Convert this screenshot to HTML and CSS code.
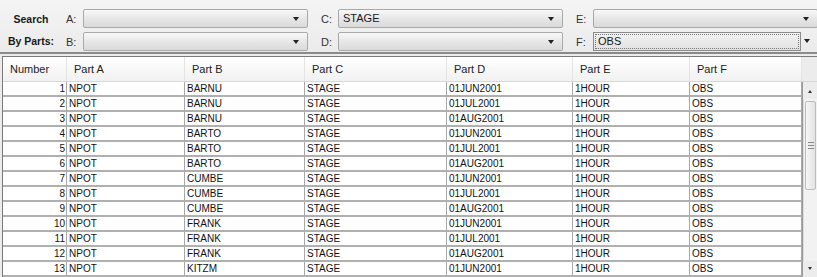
FILE: index.html
```html
<!DOCTYPE html>
<html>
<head>
    <title>Search By Parts</title>
    <link rel="stylesheet" href="styles.css">
</head>
<body>
    <div class="search-panel">
        <div class="search-title">
            <div>Search</div>
            <div>By Parts:</div>
        </div>
        <div class="field-col">
            <div class="field"><span class="field-label">A:</span><div class="combo"><span></span><i class="arrow"></i></div></div>
            <div class="field"><span class="field-label">B:</span><div class="combo"><span></span><i class="arrow"></i></div></div>
        </div>
        <div class="field-col">
            <div class="field"><span class="field-label">C:</span><div class="combo"><span>STAGE</span><i class="arrow"></i></div></div>
            <div class="field"><span class="field-label">D:</span><div class="combo"><span></span><i class="arrow"></i></div></div>
        </div>
        <div class="field-col last">
            <div class="field"><span class="field-label">E:</span><div class="combo"><span></span><i class="arrow"></i></div></div>
            <div class="field"><span class="field-label">F:</span><div class="combo editable"><span class="edit-box">OBS</span><i class="arrow"></i></div></div>
        </div>
    </div>

    <div class="table-frame">
        <div class="grid header">
            <div class="th">Number</div>
            <div class="th">Part A</div>
            <div class="th">Part B</div>
            <div class="th">Part C</div>
            <div class="th">Part D</div>
            <div class="th">Part E</div>
            <div class="th">Part F</div>
            <div class="th corner"></div>
        </div>
        <div class="table-body">
            <div class="grid rows" id="rows"></div>
            <div class="scrollbar">
                <div class="scroll-btn up"></div>
                <div class="track">
                    <div class="thumb"><span class="grip"></span></div>
                </div>
                <div class="scroll-btn down"></div>
            </div>
        </div>
    </div>

    <script>
        const data = [
            ['BARNU', '01JUN2001'], ['BARNU', '01JUL2001'], ['BARNU', '01AUG2001'],
            ['BARTO', '01JUN2001'], ['BARTO', '01JUL2001'], ['BARTO', '01AUG2001'],
            ['CUMBE', '01JUN2001'], ['CUMBE', '01JUL2001'], ['CUMBE', '01AUG2001'],
            ['FRANK', '01JUN2001'], ['FRANK', '01JUL2001'], ['FRANK', '01AUG2001'],
            ['KITZM', '01JUN2001']
        ];
        const rows = document.getElementById('rows');
        data.forEach(function (row, i) {
            const cells = [String(i + 1), 'NPOT', row[0], 'STAGE', row[1], '1HOUR', 'OBS'];
            cells.forEach(function (text, j) {
                const td = document.createElement('div');
                td.className = j === 0 ? 'td num' : 'td';
                td.textContent = text;
                rows.appendChild(td);
            });
        });
    </script>
</body>
</html>
```

FILE: styles.css
```css
body {
    margin: 0;
    width: 817px;
    height: 277px;
    overflow: hidden;
    background: #ececec;
    font-family: "Liberation Sans", Arial, sans-serif;
    color: #1a1a1a;
}
.search-panel {
    display: flex;
    height: 54px;
    padding-top: 9px;
    box-sizing: border-box;
    background: linear-gradient(#f4f4f4, #ebebeb);
    border-bottom: 2px solid #8a8a8a;
}
.search-title {
    width: 62px;
    flex-shrink: 0;
    font-size: 10.5px;
    font-weight: bold;
    text-align: center;
    display: flex;
    flex-direction: column;
    gap: 10px;
    padding-top: 4px;
}
.field-col {
    display: flex;
    flex-direction: column;
    gap: 4px;
    width: 255px;
    flex-shrink: 0;
}
.field {
    display: flex;
    align-items: center;
    height: 19px;
}
.field-label {
    width: 21px;
    flex-shrink: 0;
    padding-left: 4px;
    box-sizing: border-box;
    font-size: 11px;
    color: #333;
}
.combo {
    position: relative;
    flex-shrink: 0;
    width: 225px;
    height: 19px;
    box-sizing: border-box;
    border: 1px solid #a9a9a9;
    border-radius: 2px;
    background: linear-gradient(#f8f8f8, #e4e4e4 60%, #dadada);
    font-size: 11px;
    line-height: 17px;
    padding-left: 4px;
}
.combo.editable {
    border: none;
    background: none;
    padding-left: 0;
}
.edit-box {
    display: block;
    width: 208px;
    height: 19px;
    box-sizing: border-box;
    border: 1px solid #8c8c8c;
    background: linear-gradient(#f2f2f2, #e2e2e2);
    outline: 1px dotted #777;
    outline-offset: -3px;
    padding-left: 4px;
}
.arrow {
    position: absolute;
    right: 8px;
    top: 7px;
    width: 0;
    height: 0;
    border-left: 3px solid transparent;
    border-right: 3px solid transparent;
    border-top: 4px solid #222;
}
.table-frame {
    margin: 2px 0 0 2px;
    border-left: 1px solid #7a7a7a;
    border-top: 1px solid #7a7a7a;
    background: #fff;
}
.grid {
    display: grid;
    grid-template-columns: 64px 118px 120px 142px 126px 117px 112px;
}
.grid.header {
    grid-template-columns: 64px 118px 120px 142px 126px 117px 112px 15px;
    height: 24px;
    background: linear-gradient(#ffffff, #f1f1f1);
    border-bottom: 1px solid #d8d8d8;
}
.th {
    font-size: 11px;
    line-height: 24px;
    padding-left: 7px;
    border-right: 1px solid #e4e4e4;
    color: #222;
}
.th.corner {
    border-right: none;
    background: #ececec;
}
.table-body {
    display: flex;
}
.rows {
    grid-auto-rows: 15px;
    border-right: 1px solid #9a9a9a;
}
.td {
    font-size: 10px;
    line-height: 13px;
    padding-left: 2px;
    border-bottom: 2px solid #b0b0b0;
    border-right: 1px solid #a8a8a8;
    white-space: nowrap;
    overflow: hidden;
    color: #111;
}
.td.num {
    text-align: right;
    padding-right: 1px;
    padding-left: 0;
}
.scrollbar {
    width: 14px;
    height: 196px;
    display: flex;
    flex-direction: column;
    background: #ececec;
}
.scroll-btn {
    height: 17px;
    position: relative;
}
.scroll-btn::after {
    content: "";
    position: absolute;
    left: 5px;
    width: 0;
    height: 0;
    border-left: 2px solid transparent;
    border-right: 2px solid transparent;
}
.scroll-btn.up::after {
    top: 8px;
    border-bottom: 3px solid #333;
}
.scroll-btn.down::after {
    top: 6px;
    border-top: 3px solid #333;
}
.track {
    flex: 1;
    padding: 0 1px;
    background: #f2f2f2;
    border-left: 1px solid #dcdcdc;
}
.thumb {
    height: 87px;
    margin-top: 2px;
    border: 1px solid #bcbcbc;
    border-radius: 2px;
    background: linear-gradient(90deg, #f6f6f6, #e2e2e2);
    display: flex;
    align-items: center;
    justify-content: center;
}
.grip {
    width: 6px;
    height: 5px;
    border-top: 1px solid #888;
    border-bottom: 1px solid #888;
    position: relative;
}
.grip::after {
    content: "";
    position: absolute;
    left: 0;
    right: 0;
    top: 2px;
    border-top: 1px solid #888;
}
```
